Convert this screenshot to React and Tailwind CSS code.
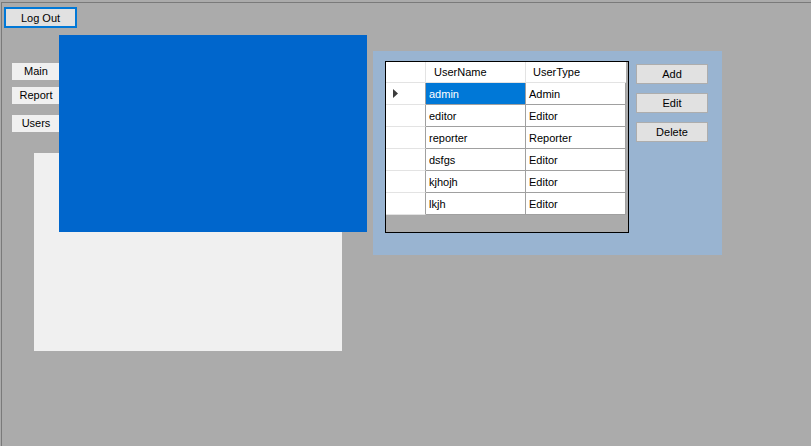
const users = [
  { name: "admin", type: "Admin" },
  { name: "editor", type: "Editor" },
  { name: "reporter", type: "Reporter" },
  { name: "dsfgs", type: "Editor" },
  { name: "kjhojh", type: "Editor" },
  { name: "lkjh", type: "Editor" },
];

const font = { fontFamily: '"Liberation Sans", Arial, sans-serif' };

const NavButton = ({ label, className = "" }) => (
  <button className={`w-[48px] h-[17px] bg-[#f0f0f0] text-[11px] leading-[17px] text-black text-center ${className}`}>
    {label}
  </button>
);

const FormButton = ({ label }) => (
  <button className="w-[72px] h-[20px] bg-[#e1e1e1] border border-[#adadad] text-[11px] leading-[18px] text-black text-center">
    {label}
  </button>
);

export default function App() {
  return (
    <div className="relative w-[811px] h-[446px] bg-[#ababab] overflow-hidden" style={font}>
      {/* mdi client frame */}
      <div className="absolute top-[2px] left-[1px] right-0 bottom-0 border-t border-l border-[#7a7a7a]" />

      <button className="absolute left-[4px] top-[7px] w-[73px] h-[21px] bg-[#e1e1e1] border-2 border-[#0078d7] text-[11px] leading-[18px] text-black text-center">
        Log Out
      </button>

      {/* left nav */}
      <div className="absolute left-[12px] top-[63px] flex flex-col">
        <NavButton label="Main" />
        <NavButton label="Report" className="mt-[7px]" />
        <NavButton label="Users" className="mt-[11px]" />
      </div>

      {/* light panel */}
      <div className="absolute left-[34px] top-[153px] w-[308px] h-[198px] bg-[#f0f0f0]" />

      {/* blue panel */}
      <div className="absolute left-[59px] top-[35px] w-[308px] h-[197px] bg-[#0066cc]" />

      {/* users panel */}
      <div className="absolute left-[373px] top-[51px] w-[349px] h-[204px] bg-[#99b4d1] flex pl-[12px] pt-[10px] gap-[7px]">
        <div className="w-[244px] h-[172px] border border-black bg-[#ababab]">
          <div className="grid grid-cols-[40px_100px_100px] w-[240px] text-[11px] text-black">
            <div className="h-[21px] bg-white border-r border-b border-[#e3e3e3]" />
            <div className="h-[21px] bg-white border-r border-b border-[#e3e3e3] pl-[8px] leading-[21px]">UserName</div>
            <div className="h-[21px] bg-white border-b border-[#e3e3e3] pl-[7px] leading-[21px]">UserType</div>
            {users.map((u, i) => (
              <div key={u.name} className="contents">
                <div className="h-[22px] bg-white border-r border-b border-r-[#a0a0a0] border-b-[#e3e3e3] flex items-center pl-[7px]">
                  {i === 0 && (
                    <svg width="5" height="9" viewBox="0 0 5 9">
                      <path d="M0 0 L5 4.5 L0 9 Z" fill="#3c3c3c" />
                    </svg>
                  )}
                </div>
                <div
                  className={`h-[22px] border-r border-b border-[#a0a0a0] pl-[3px] leading-[22px] ${
                    i === 0 ? "bg-[#0078d7] text-white" : "bg-white"
                  }`}
                >
                  {u.name}
                </div>
                <div className="h-[22px] bg-white border-r border-b border-[#a0a0a0] pl-[3px] leading-[22px]">
                  {u.type}
                </div>
              </div>
            ))}
          </div>
        </div>
        <div className="flex flex-col gap-[9px] pt-[3px]">
          <FormButton label="Add" />
          <FormButton label="Edit" />
          <FormButton label="Delete" />
        </div>
      </div>
    </div>
  );
}
